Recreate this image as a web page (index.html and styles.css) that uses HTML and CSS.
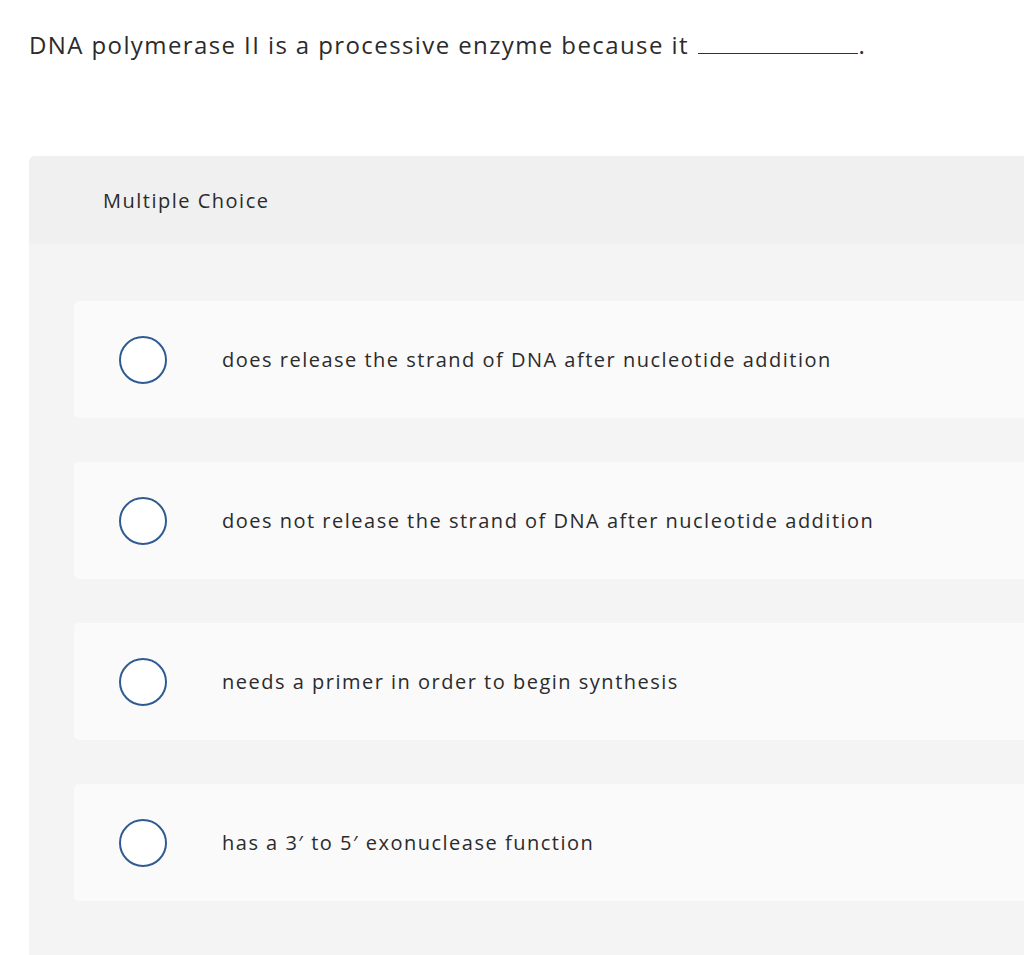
FILE: index.html
```html
<!DOCTYPE html>
<html lang="en">
<head>
    <meta charset="UTF-8">
    <meta name="viewport" content="width=device-width, initial-scale=1.0">
    <title>Multiple Choice</title>
    <link rel="stylesheet" href="styles.css">
</head>
<body>
    <p class="pregunta">DNA polymerase II is a processive enzyme because it <span class="blanco"></span>.</p>

    <div class="caja">
        <div class="cabecera">Multiple Choice</div>
        <div class="opciones">
            <label class="opcion">
                <span class="radio"></span>
                <span class="texto">does release the strand of DNA after nucleotide addition</span>
            </label>
            <label class="opcion">
                <span class="radio"></span>
                <span class="texto">does not release the strand of DNA after nucleotide addition</span>
            </label>
            <label class="opcion">
                <span class="radio"></span>
                <span class="texto">needs a primer in order to begin synthesis</span>
            </label>
            <label class="opcion">
                <span class="radio"></span>
                <span class="texto">has a 3′ to 5′ exonuclease function</span>
            </label>
        </div>
    </div>
</body>
</html>
```

FILE: styles.css
```css
*{
    margin: 0;
    padding: 0;
    box-sizing: border-box;
}
body{
    font-family: "Open Sans", "Liberation Sans", sans-serif;
    color: #2b2b2b;
    background: #fff;
    overflow: hidden;
    height: 955px;
}
.pregunta{
    padding: 29px 0 0 29px;
    font-size: 24px;
    line-height: 32px;
    letter-spacing: 1.4px;
}
.blanco{
    display: inline-block;
    width: 160px;
    margin-left: 2px;
    border-bottom: 1.5px solid #333;
    vertical-align: baseline;
}

.caja{
    margin: 95px 0 0 29px;
    background: #f4f4f4;
    border-radius: 6px 0 0 0;
    overflow: hidden;
}
.cabecera{
    height: 88px;
    background: #f0f0f0;
    padding-left: 74px;
    display: flex;
    align-items: center;
    font-size: 20px;
    letter-spacing: 1.5px;
}
.opciones{
    padding: 57px 0 60px 45px;
    display: flex;
    flex-direction: column;
    gap: 44px;
}
.opcion{
    height: 117px;
    background: #fafafa;
    border-radius: 5px 0 0 5px;
    display: flex;
    align-items: center;
    padding-left: 45px;
    font-size: 20px;
    letter-spacing: 1.5px;
}
.radio{
    width: 48px;
    height: 48px;
    border: 2px solid #2f5b92;
    border-radius: 50%;
    background: #fff;
    flex-shrink: 0;
    margin-right: 55px;
}
```
